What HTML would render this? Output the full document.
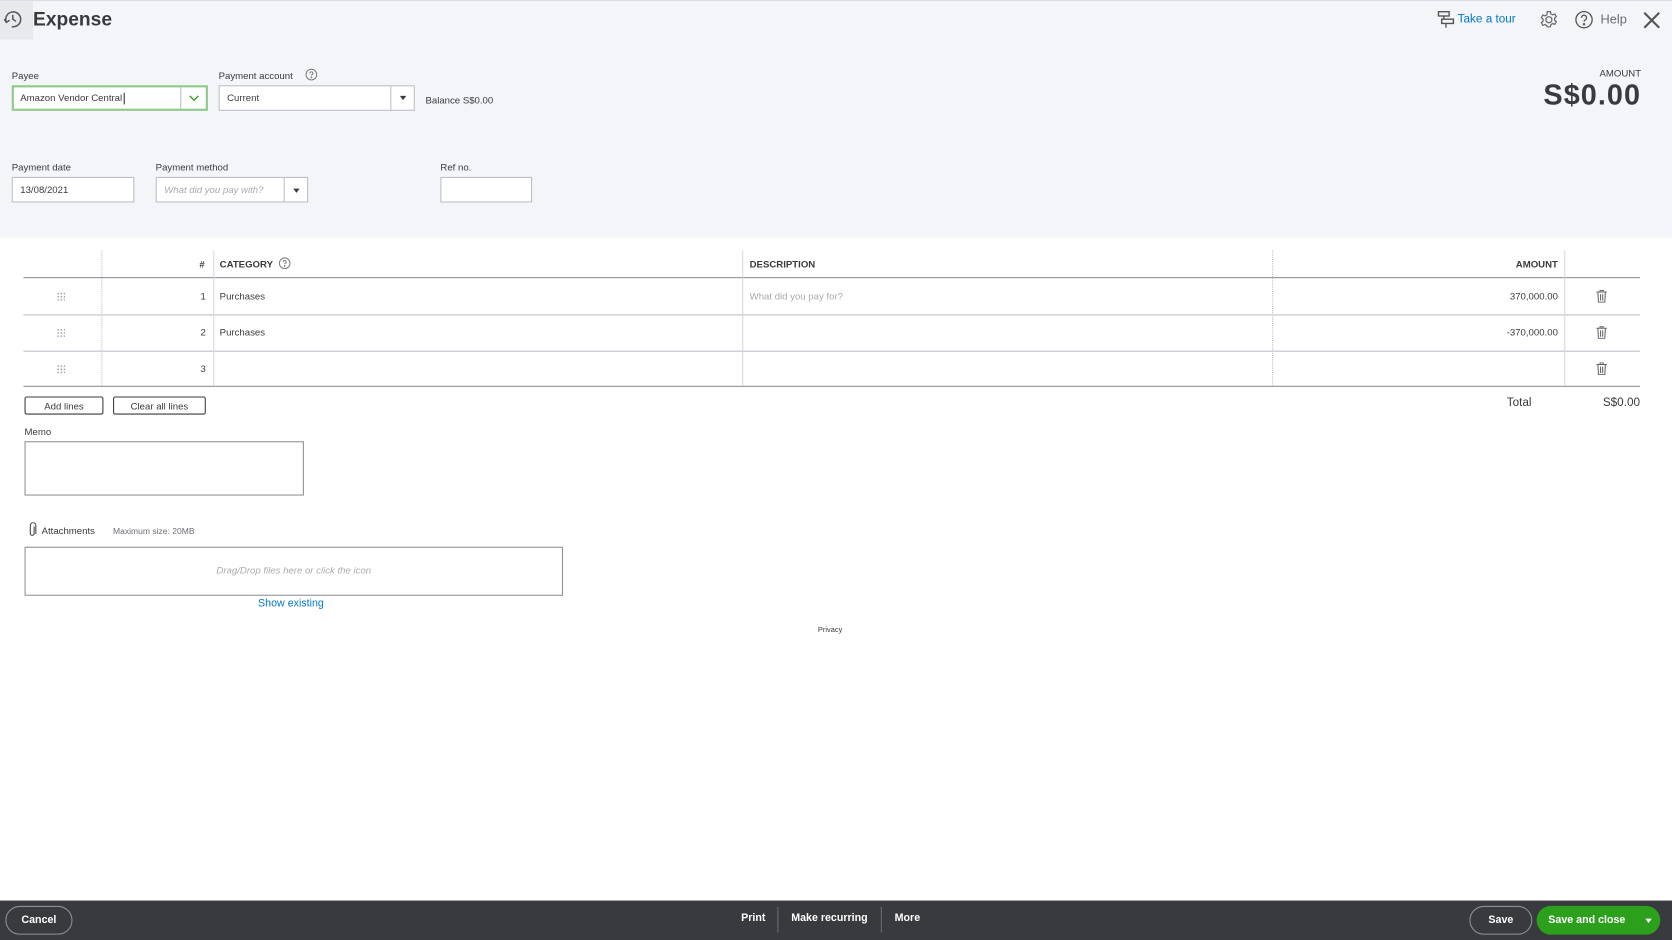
<!DOCTYPE html><html><head><meta charset="utf-8"><style>
*{box-sizing:border-box;margin:0;padding:0}
body{width:1672px;height:940px;overflow:hidden;background:#fff;font-family:"Liberation Sans",Arial,sans-serif;color:#393a3d}
#w{width:1568px;height:882px;transform:scale(1.06633,1.06576);transform-origin:0 0;position:relative}
.a{position:absolute}
.lbl{font-size:9px;color:#393a3d}
.in{position:absolute;background:#fff;border:1px solid #babec5;font-size:9px;padding-left:7px;display:flex;align-items:center}
.tri{position:absolute;width:0;height:0;border-left:3px solid transparent;border-right:3px solid transparent;border-top:4px solid #393a3d}
.vl{position:absolute;width:1px;background:#babec5}
.hl{position:absolute;height:1px;background:#d4d7dc}
.btn{position:absolute;border:1px solid #393a3d;border-radius:2px;font-size:9px;display:flex;align-items:center;justify-content:center;background:#fff}
.dots{position:absolute;width:8px;height:8px;background-image:radial-gradient(#999 0.7px,transparent 0.9px);background-size:3px 3px}
.cell{position:absolute;font-size:9px}
</style></head><body><div id="w">
<div class="a" style="left:0;top:0;width:1568px;height:223px;background:#f4f5f8;border-top:1px solid #dcdde0"></div>
<div class="a" style="left:0;top:1px;width:31px;height:36px;background:#e8e9ec"></div>
<svg class="a" style="left:2px;top:8px" width="20" height="20" viewBox="0 0 20 20" fill="none" stroke="#555" stroke-width="1.4"><path d="M4 13 A7 7 0 1 1 9 17"/><path d="M10 6v4l3 2"/><path d="M2 10l2 3 3-2"/></svg>
<div class="a" style="left:31px;top:8px;font-size:18px;font-weight:bold;color:#393a3d">Expense</div>
<svg class="a" style="left:1347px;top:10px" width="18" height="16" viewBox="0 0 18 16" fill="none" stroke="#555" stroke-width="1.3"><rect x="2" y="1" width="10" height="4"/><rect x="5" y="8" width="11" height="4"/><path d="M7 5v3M9 12v4"/></svg>
<div class="a" style="left:1367px;top:12px;font-size:11px;color:#0077c5">Take a tour</div>
<svg class="a" style="left:1443px;top:9px" width="19" height="19" viewBox="0 0 20 20" fill="none" stroke="#666" stroke-width="1.2"><circle cx="10" cy="10" r="3"/><path d="M8.5 2h3l.5 2.2 1.8 1 2.1-.8 1.5 2.6-1.7 1.5v2l1.7 1.5-1.5 2.6-2.1-.8-1.8 1-.5 2.2h-3L8 15.8l-1.8-1-2.1.8-1.5-2.6L4.3 11.5v-2L2.6 8l1.5-2.6 2.1.8 1.8-1z"/></svg>
<svg class="a" style="left:1476px;top:9px" width="19" height="19" viewBox="0 0 20 20" fill="none" stroke="#555" stroke-width="1.3"><circle cx="10" cy="10" r="8"/><path d="M7.5 8a2.5 2.5 0 1 1 3.5 2.3c-.7.4-1 .8-1 1.7"/><circle cx="10" cy="14.5" r=".6" fill="#555"/></svg>
<div class="a" style="left:1501px;top:11px;font-size:12px;color:#6b6c72">Help</div>
<svg class="a" style="left:1540px;top:10px" width="18" height="18" viewBox="0 0 18 18" stroke="#555" stroke-width="2"><path d="M2 2l14 14M16 2L2 16"/></svg>
<div class="a lbl" style="left:11px;top:66px">Payee</div>
<div class="in" style="left:11px;top:80px;width:184px;height:24px;border:2px solid #8dc98a;padding-left:6px">Amazon Vendor Central<span style="border-left:1px solid #333;height:11px;margin-left:1px"></span></div>
<div class="vl" style="left:169px;top:82px;height:20px"></div>
<svg class="a" style="left:177px;top:89px" width="10" height="7" viewBox="0 0 10 7" fill="none" stroke="#2ca01c" stroke-width="1.3"><path d="M1 1l4 4 4-4"/></svg>
<div class="a lbl" style="left:205px;top:66px">Payment account</div>
<svg class="a" style="left:286px;top:64px" width="12" height="12" viewBox="0 0 12 12" fill="none" stroke="#777" stroke-width=".9"><circle cx="6" cy="6" r="5"/><path d="M4.6 4.8a1.4 1.4 0 1 1 1.9 1.3c-.4.2-.5.4-.5.9"/><circle cx="6" cy="8.6" r=".4" fill="#777"/></svg>
<div class="in" style="left:205px;top:80px;width:184px;height:24px">Current</div>
<div class="vl" style="left:366px;top:81px;height:22px"></div>
<div class="tri" style="left:375px;top:90px"></div>
<div class="a lbl" style="left:399px;top:89px">Balance S$0.00</div>
<div class="a" style="right:29px;top:64px;font-size:9px">AMOUNT</div>
<div class="a" style="right:29px;top:74px;font-size:27px;font-weight:bold;color:#393a3d;letter-spacing:1px">S$0.00</div>
<div class="a lbl" style="left:11px;top:152px">Payment date</div>
<div class="in" style="left:11px;top:166px;width:115px;height:24px">13/08/2021</div>
<div class="a lbl" style="left:146px;top:152px">Payment method</div>
<div class="in" style="left:146px;top:166px;width:143px;height:24px;color:#aaa;font-style:italic">What did you pay with?</div>
<div class="vl" style="left:266px;top:167px;height:22px"></div>
<div class="tri" style="left:275px;top:177px"></div>
<div class="a lbl" style="left:413px;top:152px">Ref no.</div>
<div class="in" style="left:413px;top:166px;width:86px;height:24px"></div>
<div class="hl" style="left:22px;top:260px;width:1516px;background:#8d9096"></div>
<div class="hl" style="left:22px;top:295px;width:1516px;background:#babec5"></div>
<div class="hl" style="left:22px;top:329px;width:1516px;background:#babec5"></div>
<div class="hl" style="left:22px;top:362px;width:1516px;background:#8d9096"></div>
<div class="vl" style="left:95px;top:235px;height:127px;background:none;border-left:1px dotted #babec5"></div>
<div class="vl" style="left:200px;top:235px;height:127px;background:#d4d7dc"></div>
<div class="vl" style="left:696px;top:235px;height:127px;background:#d4d7dc"></div>
<div class="vl" style="left:1193px;top:235px;height:127px;background:none;border-left:1px dotted #babec5"></div>
<div class="vl" style="left:1467px;top:235px;height:127px;background:#d4d7dc"></div>
<div class="cell" style="left:187px;top:243px;font-weight:bold">#</div>
<div class="cell" style="left:206px;top:243px;font-weight:bold">CATEGORY</div>
<svg class="a" style="left:261px;top:241px" width="12" height="12" viewBox="0 0 12 12" fill="none" stroke="#777" stroke-width=".9"><circle cx="6" cy="6" r="5"/><path d="M4.6 4.8a1.4 1.4 0 1 1 1.9 1.3c-.4.2-.5.4-.5.9"/><circle cx="6" cy="8.6" r=".4" fill="#777"/></svg>
<div class="cell" style="left:703px;top:243px;font-weight:bold">DESCRIPTION</div>
<div class="cell" style="right:107px;top:243px;font-weight:bold">AMOUNT</div>
<div class="dots" style="left:53px;top:274px"></div><div class="dots" style="left:53px;top:308px"></div><div class="dots" style="left:53px;top:342px"></div>
<div class="cell" style="left:188px;top:273px">1</div><div class="cell" style="left:188px;top:307px">2</div><div class="cell" style="left:188px;top:341px">3</div>
<div class="cell" style="left:206px;top:273px">Purchases</div><div class="cell" style="left:206px;top:307px">Purchases</div>
<div class="cell" style="left:703px;top:273px;color:#aaa">What did you pay for?</div>
<div class="cell" style="right:107px;top:273px">370,000.00</div><div class="cell" style="right:107px;top:307px">-370,000.00</div>
<svg class="a" style="left:1497px;top:272px" width="10" height="12" viewBox="0 0 10 12" fill="none" stroke="#666"><path d="M0 2h10M3.5 2V.5h3V2M1.5 2l.5 9.5h6l.5-9.5M4 4v6M6 4v6"/></svg>
<svg class="a" style="left:1497px;top:306px" width="10" height="12" viewBox="0 0 10 12" fill="none" stroke="#666"><path d="M0 2h10M3.5 2V.5h3V2M1.5 2l.5 9.5h6l.5-9.5M4 4v6M6 4v6"/></svg>
<svg class="a" style="left:1497px;top:340px" width="10" height="12" viewBox="0 0 10 12" fill="none" stroke="#666"><path d="M0 2h10M3.5 2V.5h3V2M1.5 2l.5 9.5h6l.5-9.5M4 4v6M6 4v6"/></svg>
<div class="btn" style="left:23px;top:372px;width:74px;height:17px">Add lines</div>
<div class="btn" style="left:106px;top:372px;width:87px;height:17px">Clear all lines</div>
<div class="a" style="left:1413px;top:372px;font-size:11px">Total</div>
<div class="a" style="right:30px;top:372px;font-size:11px">S$0.00</div>
<div class="a lbl" style="left:23px;top:400px">Memo</div>
<div class="a" style="left:23px;top:414px;width:262px;height:51px;border:1px solid #8d9096"></div>
<svg class="a" style="left:26px;top:490px" width="9" height="14" viewBox="0 0 9 14" fill="none" stroke="#444" stroke-width="1"><path d="M6 4v6.5a1.8 1.8 0 0 1-3.6 0V3a2.6 2.6 0 0 1 5.2 0v8"/></svg>
<div class="a lbl" style="left:39px;top:493px">Attachments</div>
<div class="a" style="left:106px;top:494px;font-size:8px;color:#6b6c72">Maximum size: 20MB</div>
<div class="a" style="left:23px;top:513px;width:505px;height:46px;border:1px solid #8d9096;font-size:9px;color:#aaa;font-style:italic;display:flex;align-items:center;justify-content:center;padding-bottom:3px">Drag/Drop files here or click the icon</div>
<div class="a" style="left:242px;top:561px;font-size:10px;color:#0077c5">Show existing</div>
<div class="a" style="left:767px;top:588px;font-size:7px">Privacy</div>
<div class="a" style="left:0;top:845px;width:1568px;height:37px;background:#393a3d"></div>
<div class="a" style="left:5px;top:850px;width:63px;height:27px;border:1px solid #8d9096;border-radius:14px;color:#fff;font-size:10px;font-weight:bold;display:flex;align-items:center;justify-content:center">Cancel</div>
<div class="a" style="left:695px;top:856px;color:#fff;font-size:10px;font-weight:bold">Print</div>
<div class="a" style="left:729px;top:851px;width:1px;height:24px;background:#6b6c72"></div>
<div class="a" style="left:742px;top:856px;color:#fff;font-size:10px;font-weight:bold">Make recurring</div>
<div class="a" style="left:826px;top:851px;width:1px;height:24px;background:#6b6c72"></div>
<div class="a" style="left:839px;top:856px;color:#fff;font-size:10px;font-weight:bold">More</div>
<div class="a" style="left:1378px;top:850px;width:59px;height:27px;border:1px solid #8d9096;border-radius:14px;color:#fff;font-size:10px;font-weight:bold;display:flex;align-items:center;justify-content:center">Save</div>
<div class="a" style="left:1441px;top:850px;width:116px;height:27px;background:#2ca01c;border-radius:14px;color:#fff;font-size:10px;font-weight:bold;padding-left:11px;display:flex;align-items:center">Save and close</div>
<div class="tri" style="left:1543px;top:862px;border-top-color:#fff"></div>
</div></body></html>
